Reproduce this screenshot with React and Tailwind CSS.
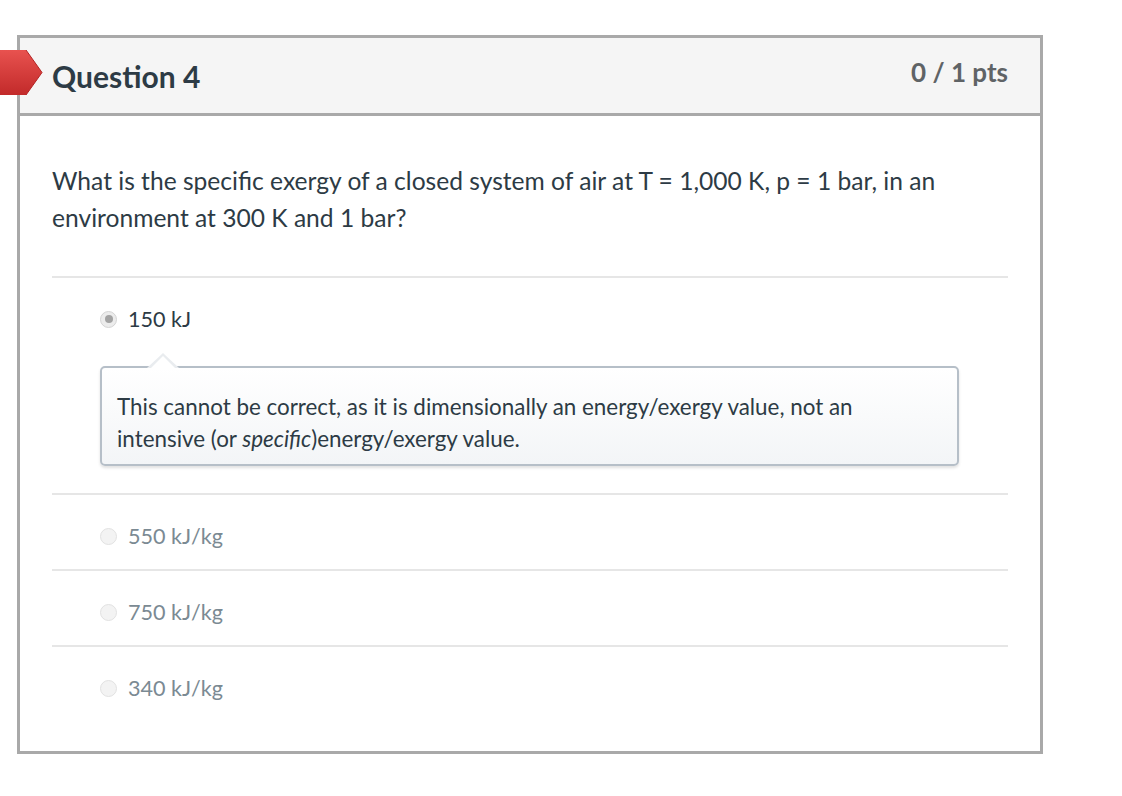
const answers = [
  {
    id: 'a1',
    label: '150 kJ',
    selected: true,
    comment: true,
  },
  { id: 'a2', label: '550 kJ/kg' },
  { id: 'a3', label: '750 kJ/kg' },
  { id: 'a4', label: '340 kJ/kg' },
];

function Radio({ checked }) {
  if (checked) {
    return (
      <span className="w-[17px] h-[17px] rounded-full border border-[#d4d4d4] bg-[#ececec] flex items-center justify-center shrink-0">
        <span className="w-[8px] h-[8px] rounded-full bg-[#a3a3a3]" />
      </span>
    );
  }
  return (
    <span className="w-[17px] h-[17px] rounded-full border border-[#e2e2e2] bg-[#f3f3f3] shrink-0" />
  );
}

function WrongArrow() {
  return (
    <svg
      className="absolute left-[-20px] top-[12px]"
      width="43"
      height="45"
      viewBox="0 0 43 45"
    >
      <defs>
        <linearGradient id="arrowRed" x1="0" y1="0" x2="0" y2="1">
          <stop offset="0" stopColor="#e8524f" />
          <stop offset="1" stopColor="#c22a2a" />
        </linearGradient>
      </defs>
      <path d="M0 0 H26 L42 22.5 L26 45 H0 Z" fill="url(#arrowRed)" />
      <path d="M26 0 L42 22.5 L26 45" fill="none" stroke="#b32222" strokeWidth="1" />
    </svg>
  );
}

export default function App() {
  return (
    <div className="min-h-[796px] bg-white pt-[35px] pl-[17px]" style={{ fontFamily: 'Lato, "Open Sans", sans-serif' }}>
      <div className="relative w-[1026px] border-[3px] border-[#a9a9a9] bg-white">
        <WrongArrow />

        {/* header */}
        <div className="h-[78px] bg-[#f5f5f5] border-b-[3px] border-[#a9a9a9] px-[32px] flex items-center justify-between">
          <h2 className="text-[30px] font-bold text-[#2d3b45] mt-[2px]">Question 4</h2>
          <span className="text-[26px] font-bold text-[#5f6366] -mt-[6px]">0 / 1 pts</span>
        </div>

        {/* body */}
        <div className="px-[32px] pt-[46px] pb-[30px]">
          <p className="text-[24.6px] leading-[37px] text-[#2d3b45] pr-[40px]">
            What is the specific exergy of a closed system of air at T = 1,000 K, p = 1 bar, in an environment at 300 K and 1 bar?
          </p>

          <div className="mt-[40px]">
            {answers.map((a) => (
              <div key={a.id} className="border-t-2 border-[#e6e6e6] pt-[26px] pb-[18px]">
                <label className="flex items-center gap-[11px] pl-[48px] h-[30px]">
                  <Radio checked={a.selected} />
                  <span
                    className={`text-[21.6px] ${a.selected ? 'text-[#2d3b45]' : 'text-[#7b8a93]'}`}
                  >
                    {a.label}
                  </span>
                </label>

                {a.comment && (
                  <div className="relative ml-[48px] mr-[49px] mt-[32px] mb-[9px] rounded-[5px] border-2 border-[#b6bfc8] bg-gradient-to-b from-white to-[#f3f5f7] shadow-[0_2px_3px_rgba(0,0,0,0.12)] px-[15px] pt-[23px] pb-[9px]">
                    <span className="absolute left-[45px] top-[-15px] w-0 h-0 border-l-[16px] border-r-[16px] border-b-[15px] border-l-transparent border-r-transparent border-b-[#e9ecef]" />
                    <span className="absolute left-[47px] top-[-12px] w-0 h-0 border-l-[14px] border-r-[14px] border-b-[14px] border-l-transparent border-r-transparent border-b-white" />
                    <p className="text-[22.4px] leading-[32px] text-[#2d3b45]">
                      This cannot be correct, as it is dimensionally an energy/exergy value, not an intensive (or{' '}
                      <em>specific</em>)energy/exergy value.
                    </p>
                  </div>
                )}
              </div>
            ))}
          </div>
        </div>
      </div>
    </div>
  );
}
